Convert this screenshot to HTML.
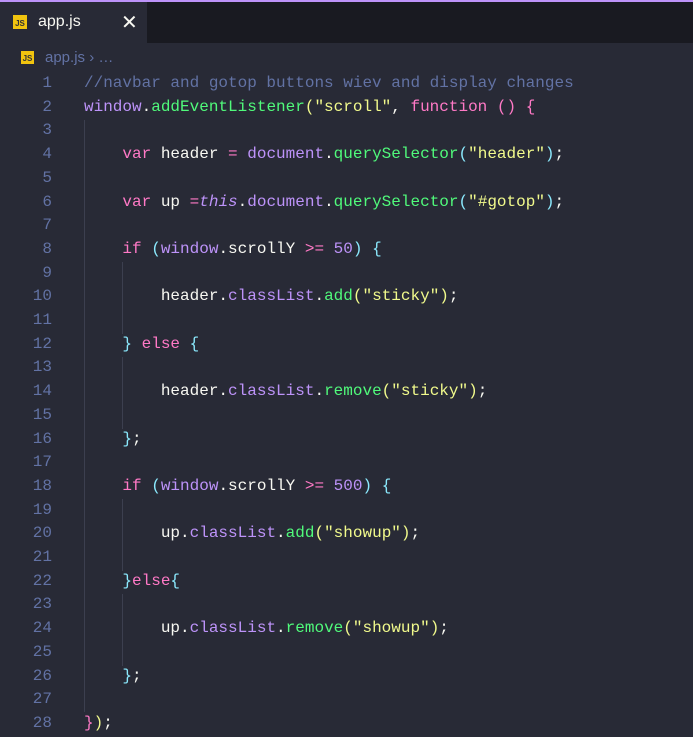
<!DOCTYPE html><html><head><style>
body{margin:0;width:693px;height:737px;background:#282a36;overflow:hidden;font-family:"Liberation Sans",sans-serif;position:relative}
.top{position:absolute;left:0;top:0;width:693px;height:2px;background:#bd93f9}
.bar{position:absolute;left:0;top:2px;width:693px;height:41px;background:#191a21}
.tab{position:absolute;left:0;top:2px;width:147px;height:41px;background:#282a36;color:#f8f8f2;font-size:16px}
.js{position:absolute;background:#f1c40f;color:#333;font-size:8px;font-weight:bold;text-align:center;font-family:"Liberation Sans",sans-serif}
.code{position:absolute;left:0;top:72px;font-family:"Liberation Mono",monospace;font-size:16px;line-height:23.7px;white-space:pre}
.ln{position:absolute;left:0;width:52px;text-align:right;color:#6272a4}
.tx{position:absolute;left:84px;color:#f8f8f2}
.g{position:absolute;width:1px;background:#3c3f4f}
.c{color:#6272a4}.p{color:#bd93f9}.f{color:#50fa7b}.s{color:#f1fa8c}.k{color:#ff79c6}.y{color:#8be9fd}.w{color:#f8f8f2}.q{color:#f1fa8c}
</style></head><body>
<div class="top"></div><div class="bar"></div>
<div class="tab"><div class="js" style="left:13px;top:13px;width:14px;height:14px;line-height:17px">JS</div><span style="position:absolute;left:38px;top:11px">app.js</span><span style="position:absolute;left:121px;top:8px;font-size:20px">✕</span></div>
<div class="js" style="left:21px;top:51px;width:13px;height:13px;line-height:16px">JS</div>
<div style="position:absolute;left:45px;top:49px;color:#6272a4;font-size:15px">app.js › …</div>
<div class="g" style="left:84px;top:120px;height:592px"></div>
<div class="g" style="left:122px;top:262px;height:72px"></div>
<div class="g" style="left:122px;top:357px;height:72px"></div>
<div class="g" style="left:122px;top:499px;height:72px"></div>
<div class="g" style="left:122px;top:594px;height:72px"></div>
<div class="code">
<div class="ln" style="top:0">1
2
3
4
5
6
7
8
9
10
11
12
13
14
15
16
17
18
19
20
21
22
23
24
25
26
27
28</div>
<div class="tx" style="top:0"><span class="c">//navbar and gotop buttons wiev and display changes</span>
<span class="p">window</span>.<span class="f">addEventListener</span><span class="q">(</span><span class="s">"scroll"</span>, <span class="k">function</span> <span class="k">() {</span>

    <span class="k">var</span> header <span class="k">=</span> <span class="p">document</span>.<span class="f">querySelector</span><span class="y">(</span><span class="s">"header"</span><span class="y">)</span>;

    <span class="k">var</span> up <span class="k">=</span><i class="p">this</i>.<span class="p">document</span>.<span class="f">querySelector</span><span class="y">(</span><span class="s">"#gotop"</span><span class="y">)</span>;

    <span class="k">if</span> <span class="y">(</span><span class="p">window</span>.scrollY <span class="k">&gt;=</span> <span class="p">50</span><span class="y">)</span> <span class="y">{</span>

        header.<span class="p">classList</span>.<span class="f">add</span><span class="q">(</span><span class="s">"sticky"</span><span class="q">)</span>;

    <span class="y">}</span> <span class="k">else</span> <span class="y">{</span>

        header.<span class="p">classList</span>.<span class="f">remove</span><span class="q">(</span><span class="s">"sticky"</span><span class="q">)</span>;

    <span class="y">}</span>;

    <span class="k">if</span> <span class="y">(</span><span class="p">window</span>.scrollY <span class="k">&gt;=</span> <span class="p">500</span><span class="y">)</span> <span class="y">{</span>

        up.<span class="p">classList</span>.<span class="f">add</span><span class="q">(</span><span class="s">"showup"</span><span class="q">)</span>;

    <span class="y">}</span><span class="k">else</span><span class="y">{</span>

        up.<span class="p">classList</span>.<span class="f">remove</span><span class="q">(</span><span class="s">"showup"</span><span class="q">)</span>;

    <span class="y">}</span>;

<span class="k">}</span><span class="q">)</span>;</div>
</div>
</body></html>
